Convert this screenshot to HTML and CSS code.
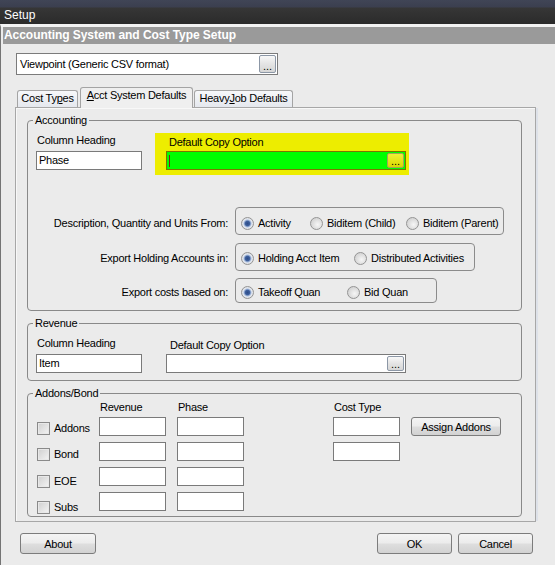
FILE: index.html
```html
<!DOCTYPE html>
<html lang="en">
<head>
    <meta charset="UTF-8">
    <meta name="viewport" content="width=device-width, initial-scale=1.0">
    <link rel="stylesheet" href="styles.css">
</head>
<body>
<div class="window">
    <div class="titlebar">Setup</div>
    <div class="frame">
        <div class="heading">Accounting System and Cost Type Setup</div>

        <div class="picker">
            <span>Viewpoint (Generic CSV format)</span>
            <span class="dots">...</span>
        </div>

        <div class="tabs">
            <span class="tab tab-cost">Cost Ty<u>p</u>es</span>
            <span class="tab tab-acct active"><u>A</u>cct System Defaults</span>
            <span class="tab tab-heavy">Heavy<u>J</u>ob Defaults</span>
        </div>

        <div class="page">
            <!-- Accounting -->
            <fieldset class="group group-acct">
                <legend>Accounting</legend>
                <div class="heading-row">
                    <div class="heading-col">
                        <div class="label">Column Heading</div>
                        <div class="text-input">Phase</div>
                    </div>
                    <div class="copy-option highlight">
                        <div class="label">Default Copy Option</div>
                        <div class="text-input copy-input">
                            <span class="caret"></span>
                            <span class="dots">...</span>
                        </div>
                    </div>
                </div>

                <div class="choices">
                    <div class="choice-row">
                        <span class="choice-label">Description, Quantity and Units From:</span>
                        <div class="option-box box-desc">
                            <span class="option opt-activity"><span class="radio on"></span>Activity</span>
                            <span class="option opt-child"><span class="radio"></span>Biditem (Child)</span>
                            <span class="option"><span class="radio"></span>Biditem (Parent)</span>
                        </div>
                    </div>
                    <div class="choice-row">
                        <span class="choice-label">Export Holding Accounts in:</span>
                        <div class="option-box box-holding">
                            <span class="option opt-holding"><span class="radio on"></span>Holding Acct Item</span>
                            <span class="option"><span class="radio"></span>Distributed Activities</span>
                        </div>
                    </div>
                    <div class="choice-row">
                        <span class="choice-label">Export costs based on:</span>
                        <div class="option-box box-costs">
                            <span class="option opt-takeoff"><span class="radio on"></span>Takeoff Quan</span>
                            <span class="option"><span class="radio"></span>Bid Quan</span>
                        </div>
                    </div>
                </div>
            </fieldset>

            <!-- Revenue -->
            <fieldset class="group group-rev">
                <legend>Revenue</legend>
                <div class="heading-row">
                    <div class="heading-col">
                        <div class="label">Column Heading</div>
                        <div class="text-input">Item</div>
                    </div>
                    <div class="copy-option">
                        <div class="label">Default Copy Option</div>
                        <div class="text-input copy-input">
                            <span></span>
                            <span class="dots">...</span>
                        </div>
                    </div>
                </div>
            </fieldset>

            <!-- Addons / Bond -->
            <fieldset class="group group-addons">
                <legend>Addons/Bond</legend>
                <div class="addons">
                    <div class="checks">
                        <span class="check-item"><span class="checkbox"></span>Addons</span>
                        <span class="check-item"><span class="checkbox"></span>Bond</span>
                        <span class="check-item"><span class="checkbox"></span>EOE</span>
                        <span class="check-item"><span class="checkbox"></span>Subs</span>
                    </div>
                    <div class="field-col">
                        <div class="col-head">Revenue</div>
                        <div class="text-input small"></div>
                        <div class="text-input small"></div>
                        <div class="text-input small"></div>
                        <div class="text-input small"></div>
                    </div>
                    <div class="field-col col-phase">
                        <div class="col-head">Phase</div>
                        <div class="text-input small"></div>
                        <div class="text-input small"></div>
                        <div class="text-input small"></div>
                        <div class="text-input small"></div>
                    </div>
                    <div class="field-col col-cost">
                        <div class="col-head">Cost Type</div>
                        <div class="text-input small"></div>
                        <div class="text-input small"></div>
                    </div>
                    <div class="assign">
                        <span class="btn btn-assign">Assign Addons</span>
                    </div>
                </div>
            </fieldset>
        </div>

        <div class="footer">
            <span class="btn btn-about">About</span>
            <div class="footer-right">
                <span class="btn">OK</span>
                <span class="btn">Cancel</span>
            </div>
        </div>
    </div>
</div>
</body>
</html>
```

FILE: styles.css
```css
body {
    margin: 0;
    font-family: "Liberation Sans", Arial, sans-serif;
    font-size: 11px;
    letter-spacing: -0.25px;
    color: #000;
}

.window {
    width: 555px;
    height: 565px;
    background: #ebebeb;
    overflow: hidden;
}

.titlebar {
    height: 24px;
    box-sizing: border-box;
    padding: 6px 0 0 4px;
    line-height: 18px;
    font-size: 12px;
    letter-spacing: 0;
    color: #fff;
    background: linear-gradient(#404556 0, #3b3f4f 7px, #363636 8px, #2b2b2b 100%);
}

.frame {
    height: 541px;
    box-sizing: border-box;
    border-left: 1px solid #747474;
    border-top: 3px solid #f3f3f3;
}

.heading {
    margin-left: 2px;
    height: 17px;
    line-height: 17px;
    padding-left: 1px;
    background: #9a9a9a;
    color: #fff;
    font-weight: bold;
    font-size: 12px;
    letter-spacing: -0.05px;
}

/* format picker */
.picker {
    margin: 9px 0 0 15px;
    width: 262px;
    height: 22px;
    box-sizing: border-box;
    border: 1px solid #7b7b7b;
    background: #fff;
    display: flex;
    align-items: center;
    justify-content: space-between;
    padding: 0 1px 0 3px;
}

.dots {
    width: 17px;
    height: 15px;
    box-sizing: border-box;
    border: 1px solid #8c97a6;
    border-radius: 2px;
    background: linear-gradient(#f8f8f8, #e4e4e4 50%, #d6d6d6);
    display: flex;
    align-items: flex-end;
    justify-content: center;
    padding-bottom: 2px;
    line-height: 8px;
    letter-spacing: 0;
}

.picker .dots {
    height: 18px;
}

/* tabs */
.tabs {
    display: flex;
    align-items: flex-end;
    height: 20px;
    margin: 12px 0 0 16px;
}

.tab {
    box-sizing: border-box;
    height: 17px;
    border: 1px solid #a4a4a4;
    border-bottom: 0;
    border-radius: 3px 3px 0 0;
    background: linear-gradient(#f7f8fa, #e5e8ee);
    text-align: center;
    line-height: 15px;
    white-space: nowrap;
}

.tab.active {
    height: 21px;
    margin: 0 1px -1px 2px;
    position: relative;
    padding-top: 1px;
    line-height: 13px;
    background: #efefef;
}

.tab-cost { width: 61px; }
.tab-acct { width: 113px; }
.tab-heavy { width: 99px; }

.page {
    margin-left: 14px;
    width: 521px;
    box-sizing: border-box;
    border: 1px solid #a7a7a7;
    box-shadow: inset 1px 1px 0 #f8f8f8, 3px 0 0 -1px #dde1e8;
    padding: 6px 13px 4px 11px;
}

/* group boxes */
.group {
    margin: 0;
    padding: 6px 0 0 0;
    min-width: 0;
    border: 1px solid #898989;
    border-radius: 4px;
}

.group legend {
    margin-left: 5px;
    padding: 0 2px;
    line-height: 13px;
}

.group-acct { padding-bottom: 7px; }
.group-rev { margin-top: 6px; padding-bottom: 2px; }
.group-addons { margin-top: 6px; padding-top: 1px; padding-bottom: 2px; }

.label {
    line-height: 13px;
}

.heading-row {
    display: flex;
    align-items: flex-start;
    padding-left: 8px;
}

.heading-col {
    width: 106px;
    padding-top: 1px;
}

.heading-col .label {
    padding-left: 1px;
    margin-bottom: 4px;
}

.text-input {
    box-sizing: border-box;
    height: 19px;
    border: 1px solid #7a7a7a;
    background: #fff;
    padding-left: 2px;
    line-height: 17px;
}

.copy-option {
    margin-left: 13px;
    width: 254px;
    box-sizing: border-box;
    padding: 3px 0 5px 11px;
}

.copy-option .label {
    padding-left: 4px;
    margin-bottom: 2px;
}

.copy-option.highlight {
    background: #eded00;
}

.copy-option.highlight .label {
    padding-left: 3px;
}

.copy-input {
    width: 240px;
    display: flex;
    align-items: center;
    justify-content: space-between;
    padding: 0 1px 0 2px;
}

.highlight .copy-input {
    background: #00ff00;
    border-color: #7d7400;
}

.highlight .dots {
    background: linear-gradient(#f0f034, #dada00);
    border-color: #a3a35a;
}

.caret {
    width: 1px;
    height: 12px;
    background: #8b1a1a;
}

/* radio choices */
.choices {
    margin-top: 32px;
    display: flex;
    flex-direction: column;
    gap: 7.5px;
}

.choice-row {
    display: flex;
    align-items: center;
}

.choice-label {
    width: 200px;
    text-align: right;
    padding-top: 4px;
    line-height: 13px;
}

.option-box {
    margin-left: 7px;
    height: 28px;
    box-sizing: border-box;
    border: 1px solid #8b8b8b;
    border-radius: 4px;
    padding: 4px 0 0 5px;
    display: flex;
    align-items: center;
}

.box-desc { width: 269px; }
.box-holding { width: 240px; }
.box-costs { width: 202px; height: 25px; }

.option {
    display: flex;
    align-items: center;
    gap: 4px;
    white-space: nowrap;
    line-height: 13px;
}

.opt-activity { width: 69px; }
.opt-child { width: 96px; }
.opt-holding { width: 113px; }
.opt-takeoff { width: 106px; }

.radio {
    width: 13px;
    height: 13px;
    box-sizing: border-box;
    border-radius: 50%;
    border: 1px solid #949494;
    background: radial-gradient(circle at 60% 60%, #f6f6f6 0, #dcdcdc 55%, #c9c9c9 100%);
}

.radio.on {
    background: radial-gradient(circle, #2d4c88 0, #3d5f9c 2.2px, #9db3d8 3.4px, #e4e8ef 4.4px, #cfcfcf 100%);
}

/* addons / bond */
.addons {
    display: flex;
    align-items: flex-start;
    padding-left: 9px;
}

.checks {
    width: 62px;
    padding-top: 20.5px;
    display: flex;
    flex-direction: column;
    gap: 13.5px;
}

.check-item {
    display: flex;
    align-items: center;
    gap: 4px;
    height: 13px;
    line-height: 13px;
}

.checkbox {
    width: 13px;
    height: 13px;
    box-sizing: border-box;
    border: 1px solid #8a8a8a;
    background: linear-gradient(135deg, #cfcfcf, #f4f4f4);
    box-shadow: inset 0 0 0 1px #e8e8e8;
}

.field-col {
    width: 67px;
    display: flex;
    flex-direction: column;
    gap: 6px;
}

.col-head {
    line-height: 13px;
    padding-left: 1px;
    margin-bottom: -3px;
}

.col-phase { margin-left: 11px; }
.col-cost { margin-left: 89px; }

.assign {
    margin-left: 11px;
    padding-top: 16px;
}

/* buttons */
.btn {
    display: flex;
    align-items: center;
    justify-content: center;
    width: 75px;
    height: 21px;
    box-sizing: border-box;
    border: 1px solid #7c7c7c;
    border-radius: 3px;
    background: linear-gradient(#f4f4f4 0, #ececec 48%, #dedede 52%, #d2d2d2 100%);
}

.btn-assign {
    width: 90px;
    height: 19px;
}

.btn-about {
    width: 76px;
}

.footer {
    display: flex;
    justify-content: space-between;
    margin: 11px 22px 0 19px;
}

.footer-right {
    display: flex;
    gap: 6px;
}
```
